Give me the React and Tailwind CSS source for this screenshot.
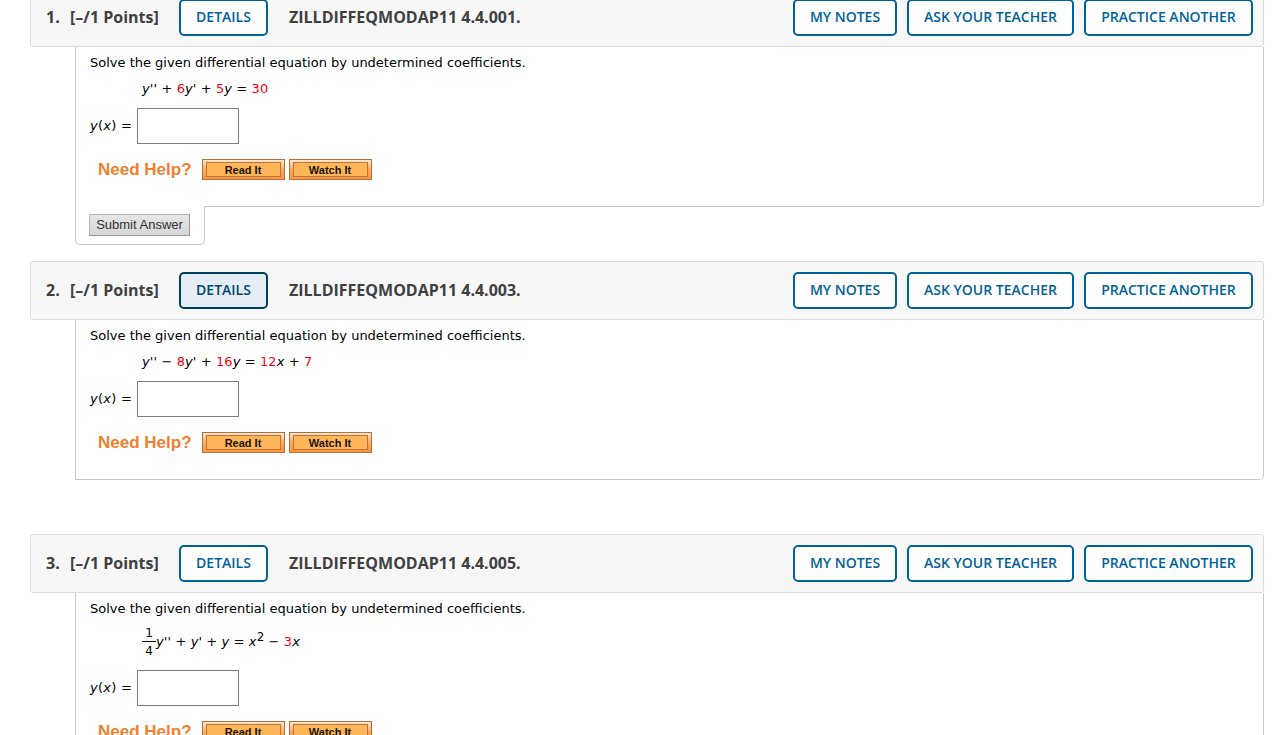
import React from 'react';
import { clsx } from 'clsx';

const questions = [
  {
    number: 1,
    code: 'ZILLDIFFEQMODAP11 4.4.001.',
    canSubmit: true,
    equation: (
      <>
        <i>y''</i> + <Num>6</Num><i>y'</i> + <Num>5</Num><i>y</i> = <Num>30</Num>
      </>
    ),
  },
  {
    number: 2,
    code: 'ZILLDIFFEQMODAP11 4.4.003.',
    detailsActive: true,
    equation: (
      <>
        <i>y''</i> − <Num>8</Num><i>y'</i> + <Num>16</Num><i>y</i> = <Num>12</Num><i>x</i> + <Num>7</Num>
      </>
    ),
  },
  {
    number: 3,
    code: 'ZILLDIFFEQMODAP11 4.4.005.',
    tall: true,
    equation: (
      <>
        <span className="flex w-[14px] flex-col items-center text-[12px] leading-[18px]">
          <span className="flex h-[18px] w-full justify-center border-b border-black">1</span>
          <span>4</span>
        </span>
        <span>
          <i>y''</i> + <i>y'</i> + <i>y</i> = <i>x</i>
          <sup className="-top-[5px] text-[12px]">2</sup> − <Num>3</Num><i>x</i>
        </span>
      </>
    ),
  },
];

function Num({ children }) {
  return <span className="text-[#fb0010]">{children}</span>;
}

function HeaderButton({ active, className, children }) {
  return (
    <button
      className={clsx(
        'h-[37px] shrink-0 rounded-[5px] border-2 pb-px text-[14px] font-semibold whitespace-nowrap',
        active ? 'border-[#003e5e] bg-[#e5eef4] text-[#00476b]' : 'border-[#006298] bg-white text-[#006298]',
        className
      )}
    >
      {children}
    </button>
  );
}

function HelpButton({ children }) {
  return (
    <button className="h-[21px] w-[83px] border border-[#b8703a] bg-linear-to-b from-[#ffe6cf] via-[#ffa95c] to-[#ff9340] p-[3px] pt-[2px]">
      <span className="flex h-[15px] items-center justify-center border border-[#b8763c] bg-[#ffb658] pt-px pr-px text-[11px] font-bold text-[#1a1208]">
        {children}
      </span>
    </button>
  );
}

function Question({ question }) {
  const { number, code, detailsActive, canSubmit, tall, equation } = question;

  return (
    <section>
      {/* Header */}
      <div className="flex h-[59px] items-center rounded-[3px] border border-[#dcdcdc] bg-[#f7f7f7] pr-[10px] pb-px pl-[15px] font-['Open_Sans',sans-serif]">
        <span className="w-6 pb-px text-[16px] font-bold text-[#404040]">{number}.</span>
        <span className="w-[109px] text-[16px] font-bold whitespace-nowrap text-[#404040]">[–/1 Points]</span>
        <HeaderButton active={detailsActive} className="w-[89px]">DETAILS</HeaderButton>
        <span className="ml-[21px] text-[16px] font-bold whitespace-nowrap text-[#404040]">{code}</span>
        <div className="ml-auto flex gap-[10px]">
          <HeaderButton className="w-[104px]">MY NOTES</HeaderButton>
          <HeaderButton className="w-[167px]">ASK YOUR TEACHER</HeaderButton>
          <HeaderButton className="w-[169px]">PRACTICE ANOTHER</HeaderButton>
        </div>
      </div>

      {/* Question body */}
      <div
        className={clsx(
          "ml-[45px] rounded-br-[5px] border border-t-0 border-[#c8c8c8] pl-[14px] font-['DejaVu_Sans',sans-serif] text-[13px] text-black",
          tall ? 'h-[176px]' : 'h-[160px]'
        )}
      >
        <p className="pt-[6px] leading-[19px]">Solve the given differential equation by undetermined coefficients.</p>
        <div className={clsx('flex items-center pl-[52px] tracking-[0.1px]', tall ? 'h-[52px] pb-[4px]' : 'h-9 pb-[2px]')}>
          {tall ? equation : <span>{equation}</span>}
        </div>
        <div className="flex h-9 items-center">
          <span className="w-[47px] tracking-[0.25px] whitespace-nowrap">
            <i>y</i>(<i>x</i>) =
          </span>
          <input className="h-9 w-[102px] border border-[#7d7d7d] bg-white" />
        </div>
        <div className="mt-[15px] flex h-[21px] items-center gap-1 pl-2 font-['Liberation_Sans',sans-serif]">
          <span className="w-[100px] text-[17px] font-bold whitespace-nowrap text-[#f08030]">Need Help?</span>
          <HelpButton>Read It</HelpButton>
          <HelpButton>Watch It</HelpButton>
        </div>
      </div>

      {/* Submit tab */}
      <div className="ml-[45px] flow-root h-[54px]">
        {canSubmit && (
          <div className="relative -mt-px h-[39px] w-[130px] rounded-b-[5px] border border-t-0 border-[#c8c8c8] bg-white pt-2 pl-[13px]">
            <button className="flex h-[22px] w-[101px] items-center justify-center border border-[#b5b5b5] border-r-[#999] border-b-[#999] bg-linear-to-b from-[#e6e6e6] to-[#d6d6d6] font-['Liberation_Sans',sans-serif] text-[13px] whitespace-nowrap text-[#333]">
              Submit Answer
            </button>
          </div>
        )}
      </div>
    </section>
  );
}

export default function App() {
  return (
    <div className="h-screen overflow-hidden bg-white">
      <div className="-mt-3 ml-[30px] w-[1234px]">
        {questions.map((question) => (
          <Question key={question.number} question={question} />
        ))}
      </div>
    </div>
  );
}
